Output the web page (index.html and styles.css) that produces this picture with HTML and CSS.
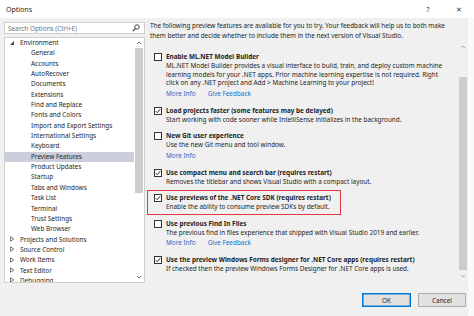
FILE: index.html
```html
<!DOCTYPE html>
<html lang="en">

<head>
    <meta charset="UTF-8">
    <meta name="viewport" content="width=device-width, initial-scale=1.0">
    <title>Options</title>
    <link rel="stylesheet" href="styles.css">
</head>

<body>
    <div class="dialog">
        <!-- Title bar -->
        <div class="titlebar">
            <span class="title">Options</span>
            <span class="help">?</span>
            <span class="close">&#x2715;</span>
        </div>

        <div class="main">
            <!-- Left: search + tree -->
            <div class="left">
                <div class="search">
                    <span class="search-text">Search Options (Ctrl+E)</span>
                    <svg class="search-icon" width="8" height="8" viewBox="0 0 8 8">
                        <circle cx="5" cy="3" r="2.2" fill="none" stroke="#333" stroke-width="0.9"/>
                        <line x1="3.4" y1="4.6" x2="0.8" y2="7.2" stroke="#333" stroke-width="1.1"/>
                    </svg>
                </div>

                <div class="tree">
                    <ul class="tree-list">
                        <li class="node"><svg class="exp" width="6" height="6" viewBox="0 0 6 6"><polygon points="5,1 5,5 1,5" fill="#444"/></svg>Environment</li>
                        <li class="leaf">General</li>
                        <li class="leaf">Accounts</li>
                        <li class="leaf">AutoRecover</li>
                        <li class="leaf">Documents</li>
                        <li class="leaf">Extensions</li>
                        <li class="leaf">Find and Replace</li>
                        <li class="leaf">Fonts and Colors</li>
                        <li class="leaf">Import and Export Settings</li>
                        <li class="leaf">International Settings</li>
                        <li class="leaf">Keyboard</li>
                        <li class="leaf selected">Preview Features</li>
                        <li class="leaf">Product Updates</li>
                        <li class="leaf">Startup</li>
                        <li class="leaf">Tabs and Windows</li>
                        <li class="leaf">Task List</li>
                        <li class="leaf">Terminal</li>
                        <li class="leaf">Trust Settings</li>
                        <li class="leaf">Web Browser</li>
                        <li class="node"><svg class="exp" width="6" height="6" viewBox="0 0 6 6"><polygon points="1.5,0.8 4.8,3 1.5,5.2" fill="none" stroke="#555" stroke-width="0.8"/></svg>Projects and Solutions</li>
                        <li class="node"><svg class="exp" width="6" height="6" viewBox="0 0 6 6"><polygon points="1.5,0.8 4.8,3 1.5,5.2" fill="none" stroke="#555" stroke-width="0.8"/></svg>Source Control</li>
                        <li class="node"><svg class="exp" width="6" height="6" viewBox="0 0 6 6"><polygon points="1.5,0.8 4.8,3 1.5,5.2" fill="none" stroke="#555" stroke-width="0.8"/></svg>Work Items</li>
                        <li class="node"><svg class="exp" width="6" height="6" viewBox="0 0 6 6"><polygon points="1.5,0.8 4.8,3 1.5,5.2" fill="none" stroke="#555" stroke-width="0.8"/></svg>Text Editor</li>
                        <li class="node"><svg class="exp" width="6" height="6" viewBox="0 0 6 6"><polygon points="1.5,0.8 4.8,3 1.5,5.2" fill="none" stroke="#555" stroke-width="0.8"/></svg>Debugging</li>
                    </ul>
                    <div class="vbar tree-bar">
                        <svg class="arrow" width="10" height="10" viewBox="0 0 10 10"><polyline points="3,6 5,4 7,6" fill="none" stroke="#606060" stroke-width="0.9"/></svg>
                        <div class="track"><div class="thumb"></div></div>
                        <svg class="arrow" width="10" height="10" viewBox="0 0 10 10"><polyline points="3,4 5,6 7,4" fill="none" stroke="#606060" stroke-width="0.9"/></svg>
                    </div>
                </div>
            </div>

            <!-- Right: preview features -->
            <div class="right">
                <p class="intro">The following preview features are available for you to try. Your feedback will help us to both make<br>them better and decide whether to include them in the next version of Visual Studio.</p>

                <div class="panel">
                    <div class="features">
                        <div class="feature">
                            <span class="check"></span>
                            <div class="text">
                                <div class="name">Enable ML.NET Model Builder</div>
                                <div class="desc">ML.NET Model Builder provides a visual interface to build, train, and deploy custom machine<br>learning models for your .NET apps. Prior machine learning expertise is not required. Right<br>click on any .NET project and Add &gt; Machine Learning to your project!</div>
                                <div class="links"><a>More Info</a><a>Give Feedback</a></div>
                            </div>
                        </div>

                        <div class="feature">
                            <span class="check checked"><svg width="6" height="6" viewBox="0 0 6 6"><polyline points="0.8,3.2 2.3,4.7 5.2,1.2" fill="none" stroke="#222" stroke-width="1"/></svg></span>
                            <div class="text">
                                <div class="name">Load projects faster (some features may be delayed)</div>
                                <div class="desc">Start working with code sooner while IntelliSense initializes in the background.</div>
                            </div>
                        </div>

                        <div class="feature">
                            <span class="check"></span>
                            <div class="text">
                                <div class="name">New Git user experience</div>
                                <div class="desc">Use the new Git menu and tool window.</div>
                                <div class="links"><a>More Info</a></div>
                            </div>
                        </div>

                        <div class="feature">
                            <span class="check checked"><svg width="6" height="6" viewBox="0 0 6 6"><polyline points="0.8,3.2 2.3,4.7 5.2,1.2" fill="none" stroke="#222" stroke-width="1"/></svg></span>
                            <div class="text">
                                <div class="name">Use compact menu and search bar (requires restart)</div>
                                <div class="desc">Removes the titlebar and shows Visual Studio with a compact layout.</div>
                            </div>
                        </div>

                        <div class="feature marked">
                            <span class="check checked"><svg width="6" height="6" viewBox="0 0 6 6"><polyline points="0.8,3.2 2.3,4.7 5.2,1.2" fill="none" stroke="#222" stroke-width="1"/></svg></span>
                            <div class="text">
                                <div class="name">Use previews of the .NET Core SDK (requires restart)</div>
                                <div class="desc">Enable the ability to consume preview SDKs by default.</div>
                            </div>
                        </div>

                        <div class="feature">
                            <span class="check"></span>
                            <div class="text">
                                <div class="name">Use previous Find In Files</div>
                                <div class="desc">The previous find in files experience that shipped with Visual Studio 2019 and earlier.</div>
                                <div class="links"><a>More Info</a><a>Give Feedback</a></div>
                            </div>
                        </div>

                        <div class="feature">
                            <span class="check checked"><svg width="6" height="6" viewBox="0 0 6 6"><polyline points="0.8,3.2 2.3,4.7 5.2,1.2" fill="none" stroke="#222" stroke-width="1"/></svg></span>
                            <div class="text">
                                <div class="name">Use the preview Windows Forms designer for .NET Core apps (requires restart)</div>
                                <div class="desc">If checked then the preview Windows Forms Designer for .NET Core apps is used.</div>
                            </div>
                        </div>
                    </div>

                    <div class="vbar panel-bar">
                        <svg class="arrow" width="10" height="10" viewBox="0 0 10 10"><polyline points="3,6 5,4 7,6" fill="none" stroke="#a0a0a0" stroke-width="0.9"/></svg>
                        <div class="track"><div class="thumb"></div></div>
                        <svg class="arrow" width="10" height="10" viewBox="0 0 10 10"><polyline points="3,4 5,6 7,4" fill="none" stroke="#a0a0a0" stroke-width="0.9"/></svg>
                    </div>
                </div>
            </div>
        </div>

        <!-- Buttons -->
        <div class="footer">
            <button class="btn default">OK</button>
            <button class="btn">Cancel</button>
        </div>
    </div>
</body>

</html>
```

FILE: styles.css
```css
body {
    margin: 0;
    font-family: 'Noto Sans', sans-serif;
    font-size: 6.4px;
    color: #1e1e1e;
}

.dialog {
    width: 474px;
    height: 316px;
    box-sizing: border-box;
    background-color: #f0f0f0;
    border-right: 6px solid #fafafa;
    display: flex;
    flex-direction: column;
}

/* title bar */
.titlebar {
    height: 18px;
    background-color: #ffffff;
    margin-right: -6px;
    padding: 0 5px 0 6px;
    display: flex;
    align-items: center;
}

.title {
    flex: 1;
    font-size: 7px;
}

.help,
.close {
    width: 20px;
    text-align: center;
    font-size: 7px;
    color: #333;
}

.help {
    margin-right: 11px;
}

.main {
    height: 265px;
    padding-left: 4px;
    display: flex;
}

/* left column */
.left {
    width: 141px;
    display: flex;
    flex-direction: column;
}

.search {
    margin-top: 4px;
    height: 12px;
    box-sizing: border-box;
    border: 1px solid #cfcfcf;
    background-color: #ffffff;
    padding: 0 4px 0 3px;
    display: flex;
    align-items: center;
}

.search-text {
    flex: 1;
    color: #717171;
}

.tree {
    margin-top: 3px;
    height: 246px;
    box-sizing: border-box;
    border: 1px solid #cfcfcf;
    background-color: #ffffff;
    display: flex;
    overflow: hidden;
}

.tree-list {
    flex: 1;
    margin: 0;
    padding: 0;
    list-style: none;
    overflow: hidden;
}

.tree-list li {
    height: 10.35px;
    line-height: 10.35px;
    white-space: nowrap;
}

.tree-list .node {
    padding-left: 4px;
}

.tree-list .leaf {
    padding-left: 26px;
}

.tree-list .selected {
    background-color: #cccedb;
}

.exp {
    margin-right: 5px;
    vertical-align: -0.5px;
}

/* scrollbars */
.vbar {
    width: 10px;
    display: flex;
    flex-direction: column;
}

.vbar .arrow {
    flex: none;
    display: block;
}

.vbar .track {
    flex: 1;
}

.vbar .thumb {
    margin: 0 1px;
    background-color: #cdcdcd;
}

.tree-bar .thumb {
    height: 145px;
}

.panel-bar .thumb {
    margin-top: 25px;
    height: 193px;
}

/* right column */
.right {
    flex: 1;
    margin-left: 2px;
    padding-bottom: 2px;
    display: flex;
    flex-direction: column;
}

.intro {
    margin: 3px 0 1px 3px;
    line-height: 10px;
    white-space: nowrap;
}

.panel {
    flex: 1;
    display: flex;
}

.features {
    flex: 1;
    padding: 10px 0 0 7px;
}

.feature {
    display: flex;
    margin-bottom: 7px;
    white-space: nowrap;
}

.feature.marked {
    position: relative;
}

.feature.marked::after {
    content: "";
    position: absolute;
    top: -3px;
    left: -7px;
    width: 194px;
    bottom: -3px;
    border: 1.5px solid #e2383f;
    box-sizing: border-box;
}

.check {
    flex: none;
    width: 8px;
    height: 8px;
    box-sizing: border-box;
    margin: 1px 4px 0 0;
    border: 1px solid #333333;
    background-color: #ffffff;
    display: flex;
    align-items: center;
    justify-content: center;
}

.name {
    font-weight: 700;
    line-height: 10px;
}

.desc {
    line-height: 8.5px;
}

.links {
    line-height: 11px;
}

.links a {
    color: #1a6fc4;
    margin-right: 12px;
}

/* footer */
.footer {
    flex: 1;
    padding: 10px 2px 0 0;
    display: flex;
    justify-content: flex-end;
    align-items: flex-start;
    gap: 7px;
}

.btn {
    width: 48px;
    height: 14px;
    padding: 0;
    font-family: inherit;
    font-size: 6.4px;
    color: #1e1e1e;
    background-color: #e1e1e1;
    border: 1px solid #adadad;
}

.btn.default {
    width: 49px;
    border-color: #0078d7;
    box-shadow: inset 0 0 0 0.5px #0078d7;
}
```
